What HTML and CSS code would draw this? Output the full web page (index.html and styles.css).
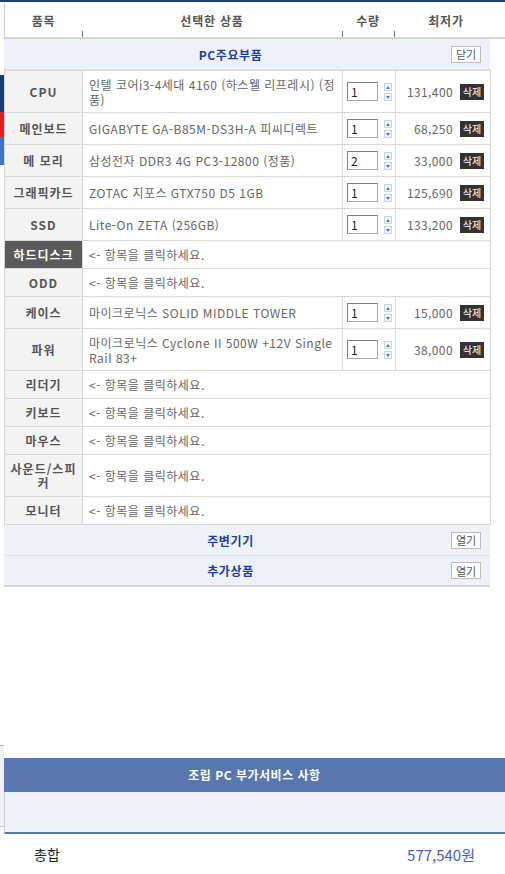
FILE: index.html
```html
<!DOCTYPE html>
<html lang="ko">
<head>
<meta charset="utf-8">
<title>견적</title>
<link rel="stylesheet" href="styles.css">
</head>
<body>
<div class="topline"></div>
<div class="page">
  <div class="gutter">
    <span class="mark mark-navy"></span>
    <span class="mark mark-red"></span>
    <span class="mark mark-blue"></span>
    <span class="mark mark-grey"></span>
  </div>
  <div class="main">
    <div class="thead">
      <div class="th">품목</div>
      <div class="th tick">선택한 상품</div>
      <div class="th tick">수량</div>
      <div class="th tick">최저가</div>
    </div>

    <div class="parts">
      <div class="section-bar">
        <span class="bar-title">PC주요부품</span>
        <button class="toggle">닫기</button>
      </div>
      <table class="items">
        <colgroup>
          <col class="w-cat"><col class="w-name"><col class="w-qty"><col class="w-price">
        </colgroup>
        <tr class="row-tall">
          <th class="cat">CPU</th>
          <td class="name">인텔 코어i3-4세대 4160 (하스웰 리프레시) (정품)</td>
          <td class="qty"><div class="qty-box"><span class="qty-input">1</span><span class="spin"><i class="up"></i><i class="down"></i></span></div></td>
          <td class="price"><div class="price-box"><span class="amount">131,400</span><span class="del">삭제</span></div></td>
        </tr>
        <tr class="row-mid">
          <th class="cat">메인보드</th>
          <td class="name">GIGABYTE GA-B85M-DS3H-A 피씨디렉트</td>
          <td class="qty"><div class="qty-box"><span class="qty-input">1</span><span class="spin"><i class="up"></i><i class="down"></i></span></div></td>
          <td class="price"><div class="price-box"><span class="amount">68,250</span><span class="del">삭제</span></div></td>
        </tr>
        <tr class="row-mid">
          <th class="cat">메 모리</th>
          <td class="name">삼성전자 DDR3 4G PC3-12800 (정품)</td>
          <td class="qty"><div class="qty-box"><span class="qty-input">2</span><span class="spin"><i class="up"></i><i class="down"></i></span></div></td>
          <td class="price"><div class="price-box"><span class="amount">33,000</span><span class="del">삭제</span></div></td>
        </tr>
        <tr class="row-mid">
          <th class="cat">그래픽카드</th>
          <td class="name">ZOTAC 지포스 GTX750 D5 1GB</td>
          <td class="qty"><div class="qty-box"><span class="qty-input">1</span><span class="spin"><i class="up"></i><i class="down"></i></span></div></td>
          <td class="price"><div class="price-box"><span class="amount">125,690</span><span class="del">삭제</span></div></td>
        </tr>
        <tr class="row-mid">
          <th class="cat">SSD</th>
          <td class="name">Lite-On ZETA (256GB)</td>
          <td class="qty"><div class="qty-box"><span class="qty-input">1</span><span class="spin"><i class="up"></i><i class="down"></i></span></div></td>
          <td class="price"><div class="price-box"><span class="amount">133,200</span><span class="del">삭제</span></div></td>
        </tr>
        <tr class="row-low">
          <th class="cat cat-active">하드디스크</th>
          <td class="name" colspan="3">&lt;- 항목을 클릭하세요.</td>
        </tr>
        <tr class="row-low">
          <th class="cat">ODD</th>
          <td class="name" colspan="3">&lt;- 항목을 클릭하세요.</td>
        </tr>
        <tr class="row-mid">
          <th class="cat">케이스</th>
          <td class="name">마이크로닉스 SOLID MIDDLE TOWER</td>
          <td class="qty"><div class="qty-box"><span class="qty-input">1</span><span class="spin"><i class="up"></i><i class="down"></i></span></div></td>
          <td class="price"><div class="price-box"><span class="amount">15,000</span><span class="del">삭제</span></div></td>
        </tr>
        <tr class="row-tall">
          <th class="cat">파워</th>
          <td class="name">마이크로닉스 Cyclone II 500W +12V Single Rail 83+</td>
          <td class="qty"><div class="qty-box"><span class="qty-input">1</span><span class="spin"><i class="up"></i><i class="down"></i></span></div></td>
          <td class="price"><div class="price-box"><span class="amount">38,000</span><span class="del">삭제</span></div></td>
        </tr>
        <tr class="row-low">
          <th class="cat">리더기</th>
          <td class="name" colspan="3">&lt;- 항목을 클릭하세요.</td>
        </tr>
        <tr class="row-low">
          <th class="cat">키보드</th>
          <td class="name" colspan="3">&lt;- 항목을 클릭하세요.</td>
        </tr>
        <tr class="row-low">
          <th class="cat">마우스</th>
          <td class="name" colspan="3">&lt;- 항목을 클릭하세요.</td>
        </tr>
        <tr class="row-tall">
          <th class="cat">사운드/스피커</th>
          <td class="name" colspan="3">&lt;- 항목을 클릭하세요.</td>
        </tr>
        <tr class="row-low">
          <th class="cat">모니터</th>
          <td class="name" colspan="3">&lt;- 항목을 클릭하세요.</td>
        </tr>
      </table>
      <div class="section-bar">
        <span class="bar-title">주변기기</span>
        <button class="toggle">열기</button>
      </div>
      <div class="section-bar section-last">
        <span class="bar-title">추가상품</span>
        <button class="toggle">열기</button>
      </div>
    </div>

    <div class="service">
      <div class="service-head">조립 PC 부가서비스 사항</div>
      <div class="service-body"></div>
    </div>
    <div class="total">
      <span class="total-label">총합</span>
      <span class="total-value">577,540원</span>
    </div>
  </div>
</div>
</body>
</html>
```

FILE: styles.css
```css
* { box-sizing: border-box; }

html, body {
  margin: 0;
  padding: 0;
  background: #fff;
  font-family: "Noto Sans CJK KR", "Noto Sans", sans-serif;
  font-size: 12px;
  color: #666;
}

.topline {
  height: 2px;
  background: #203d7c;
}

.page {
  display: flex;
  align-items: flex-start;
  width: 505px;
}

.gutter {
  width: 4px;
  flex: none;
  display: flex;
  flex-direction: column;
}

.mark { display: block; width: 4px; }
.mark-navy { margin-top: 73px; height: 37px; background: #1f3a7a; }
.mark-red { height: 25px; background: #e0201e; }
.mark-blue { height: 28px; background: #3a78c2; }
.mark-grey {
  margin-top: 580px;
  height: 82px;
  background: #eef1f6;
  border-top: 1px solid #b8b8b8;
  border-bottom: 1px solid #c8c8c8;
}

.main {
  width: 501px;
  flex: none;
}

/* header */
.thead {
  display: grid;
  grid-template-columns: 77px 260px 52px 104px;
  height: 37px;
  border-left: 1px solid #cfcfcf;
  border-bottom: 2px solid #d6d6d6;
  background: #fff;
}
.th {
  position: relative;
  display: flex;
  align-items: center;
  justify-content: center;
  padding-top: 1px;
  font-weight: bold;
  font-size: 12px;
  letter-spacing: 0.8px;
  color: #555;
}
.tick::before {
  content: "";
  position: absolute;
  left: 0;
  bottom: 0;
  height: 6px;
  border-left: 1px solid #777;
}

/* parts */
.parts {
  width: 486px;
}

.section-bar {
  display: flex;
  align-items: center;
  height: 31px;
  background: #eef2f8;
  border-bottom: 1px solid #dde2ea;
}
.section-last {
  border-bottom: 2px solid #d3d7dd;
}
.bar-title {
  flex: 1;
  text-align: center;
  padding-left: 6px;
  font-weight: bold;
  font-size: 12px;
  letter-spacing: 0.6px;
  color: #233f9c;
}
.toggle {
  margin: 0 9px 0 0;
  width: 30px;
  height: 17px;
  padding: 0;
  border: 1px solid #bcbcbc;
  background: #fff;
  font-family: inherit;
  font-size: 11px;
  line-height: 14px;
  color: #555;
}

.items {
  width: 486px;
  border-collapse: collapse;
  table-layout: fixed;
  border-left: 1px solid #d4d4d4;
  border-right: 1px solid #d4d4d4;
}
.w-cat { width: 78px; }
.w-name { width: 260px; }
.w-qty { width: 53px; }
.w-price { width: 95px; }

.items th, .items td {
  padding: 0;
  border-top: 1px solid #d9d9d9;
  border-bottom: 1px solid #d9d9d9;
  vertical-align: middle;
}
.items td + td { border-left: 1px solid #d9d9d9; }

.row-tall { height: 42px; }
.row-mid { height: 32px; }
.row-low { height: 28px; }

.cat {
  background: #f3f3f3;
  border-right: 1px solid #d9d9d9;
  text-align: center;
  font-weight: bold;
  font-size: 12px;
  line-height: 14px;
  letter-spacing: 1px;
  color: #555;
  padding: 0 2px !important;
}
.cat-active {
  background: #5a5a5a;
  color: #fff;
}

.name {
  padding: 0 1px 0 6px !important;
  font-size: 12px;
  line-height: 15px;
  letter-spacing: 0.5px;
  color: #666;
}

.qty-box {
  display: flex;
  align-items: center;
  padding-left: 4px;
  gap: 6px;
}
.qty-input {
  display: block;
  width: 31px;
  height: 19px;
  border: 1px solid #a5a5a5;
  border-top-color: #7e7e7e;
  border-left-color: #7e7e7e;
  background: #fff;
  font-size: 12px;
  line-height: 18px;
  padding-left: 3px;
  color: #222;
}
.spin {
  display: flex;
  flex-direction: column;
  gap: 2px;
}
.spin i {
  position: relative;
  display: block;
  width: 8px;
  height: 8px;
  border: 1px solid #c9d6de;
  background: #eef4f8;
}
.spin i::after {
  content: "";
  position: absolute;
  left: 1px;
  width: 0;
  height: 0;
  border-left: 2px solid transparent;
  border-right: 2px solid transparent;
}
.spin .up::after { top: 2px; border-bottom: 3px solid #3c8bb0; }
.spin .down::after { top: 2px; border-top: 3px solid #3c8bb0; }

.price-box {
  display: flex;
  align-items: center;
  justify-content: flex-end;
  gap: 7px;
  padding-right: 6px;
}
.amount {
  font-size: 12px;
  letter-spacing: 0.4px;
  color: #666;
}
.del {
  display: block;
  width: 24px;
  height: 16px;
  background: #333;
  color: #fff;
  font-size: 10px;
  line-height: 16px;
  text-align: center;
}

/* service */
.service {
  margin-top: 171px;
}
.service-head {
  height: 34px;
  background: #5877b0;
  color: #fff;
  font-weight: bold;
  font-size: 12px;
  letter-spacing: 0.5px;
  display: flex;
  align-items: center;
  justify-content: center;
  padding-bottom: 2px;
}
.service-body {
  height: 42px;
  background: #eff2f7;
  border-left: 1px solid #c8cfdc;
  border-bottom: 2px solid #5877b0;
}

.total {
  display: flex;
  align-items: center;
  justify-content: space-between;
  height: 44px;
  padding: 0 30px 4px 30px;
}
.total-label {
  font-size: 14px;
  color: #222;
}
.total-value {
  font-size: 15px;
  color: #4b5db0;
}
```
